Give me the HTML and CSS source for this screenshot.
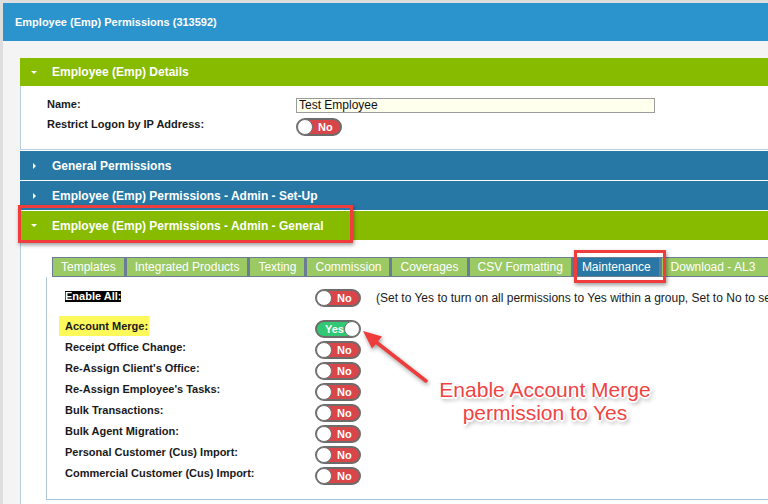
FILE: index.html
```html
<!DOCTYPE html>
<html>
<head>
<meta charset="utf-8">
<title>Employee (Emp) Permissions</title>
<link rel="stylesheet" href="styles.css">
</head>
<body>
<div class="page">
  <div class="page-header">Employee (Emp) Permissions (313592)</div>
  <div class="content">
    <div class="sec-head green"><span class="tri-down"></span>Employee (Emp) Details</div>
    <div class="details">
      <div class="lbl">Name:</div>
      <div class="input">Test Employee</div>
      <div class="lbl">Restrict Logon by IP Address:</div>
      <div><span class="tog no"><span class="knob"></span><span class="tt">No</span></span></div>
    </div>
    <div class="sec-head next blue"><span class="tri-right"></span>General Permissions</div>
    <div class="sec-head next blue"><span class="tri-right"></span>Employee (Emp) Permissions - Admin - Set-Up</div>
    <div class="sec-head next green"><span class="tri-down"></span>Employee (Emp) Permissions - Admin - General</div>
    <div class="gen-body">
      <div class="tabs">
        <div class="tabs-inner">
          <div class="tab">Templates</div>
          <div class="tab">Integrated Products</div>
          <div class="tab">Texting</div>
          <div class="tab">Commission</div>
          <div class="tab">Coverages</div>
          <div class="tab">CSV Formatting</div>
          <div class="tab active">Maintenance</div>
          <div class="tab last">Download - AL3</div>
        </div>
      </div>
      <div class="panel">
        <div class="prow first">
          <div class="lbl"><span class="sel">Enable All:</span></div>
          <span class="tog no"><span class="knob"></span><span class="tt">No</span></span>
          <div class="desc">(Set to Yes to turn on all permissions to Yes within a group, Set to No to set the values back to No)</div>
        </div>
        <div class="prow">
          <div class="lbl"><span class="hl">Account Merge:</span></div>
          <span class="tog yes"><span class="tt">Yes</span><span class="knob"></span></span>
        </div>
        <div class="prow">
          <div class="lbl">Receipt Office Change:</div>
          <span class="tog no"><span class="knob"></span><span class="tt">No</span></span>
        </div>
        <div class="prow">
          <div class="lbl">Re-Assign Client's Office:</div>
          <span class="tog no"><span class="knob"></span><span class="tt">No</span></span>
        </div>
        <div class="prow">
          <div class="lbl">Re-Assign Employee's Tasks:</div>
          <span class="tog no"><span class="knob"></span><span class="tt">No</span></span>
        </div>
        <div class="prow">
          <div class="lbl">Bulk Transactions:</div>
          <span class="tog no"><span class="knob"></span><span class="tt">No</span></span>
        </div>
        <div class="prow">
          <div class="lbl">Bulk Agent Migration:</div>
          <span class="tog no"><span class="knob"></span><span class="tt">No</span></span>
        </div>
        <div class="prow">
          <div class="lbl">Personal Customer (Cus) Import:</div>
          <span class="tog no"><span class="knob"></span><span class="tt">No</span></span>
        </div>
        <div class="prow">
          <div class="lbl">Commercial Customer (Cus) Import:</div>
          <span class="tog no"><span class="knob"></span><span class="tt">No</span></span>
        </div>
      </div>
    </div>
  </div>
</div>

<div class="redbox box-general"></div>
<div class="redbox box-tab"></div>
<svg class="arrow" width="768" height="504" viewBox="0 0 768 504" xmlns="http://www.w3.org/2000/svg">
  <line x1="426" y1="381" x2="376" y2="342" stroke="#ee3b3b" stroke-width="3.5" stroke-linecap="round"/>
  <polygon points="363,331 382,336.5 372,348.5" fill="#ee3b3b"/>
</svg>
<div class="note">Enable Account Merge<br>permission to Yes</div>
</body>
</html>
```

FILE: styles.css
```css
html, body {
  margin: 0;
  padding: 0;
}
body {
  position: relative;
  width: 768px;
  height: 504px;
  overflow: hidden;
  background: #dedede;
  font-family: "Liberation Sans", Arial, sans-serif;
  color: #1a1a1a;
}
.page {
  margin: 3px 0 0 3px;
  width: 900px;
  height: 560px;
  background: #f4f4f4;
}
.page-header {
  height: 38px;
  line-height: 38px;
  background: #2b94cd;
  color: #fff;
  font-weight: bold;
  font-size: 11px;
  padding-left: 12px;
}
.content {
  padding: 17px 0 0 17px;
}
.sec-head {
  height: 28px;
  display: flex;
  align-items: center;
  color: #fff;
  font-weight: bold;
  font-size: 12px;
  padding-left: 11px;
  white-space: nowrap;
}
.sec-head.next {
  height: 29px;
  border-top: 1px solid #fff;
}
.green { background: #87bb00; }
.blue { background: #2778a5; }
.tri-down {
  width: 0;
  height: 0;
  border-left: 3px solid transparent;
  border-right: 3px solid transparent;
  border-top: 3px solid #fff;
  margin-right: 15px;
}
.tri-right {
  width: 0;
  height: 0;
  border-top: 3px solid transparent;
  border-bottom: 3px solid transparent;
  border-left: 3px solid #fff;
  margin-left: 2px;
  margin-right: 16px;
}
.details {
  height: 64px;
  box-sizing: border-box;
  background: #fff;
  border-left: 1px solid #b7cde0;
  border-bottom: 1px solid #b7cde0;
  padding: 12px 0 0 26px;
  display: grid;
  grid-template-columns: 249px 359px;
  grid-template-rows: 15px 18px;
  row-gap: 5px;
}
.lbl {
  font-weight: bold;
  font-size: 11px;
  line-height: 13px;
  white-space: nowrap;
}
.input {
  box-sizing: border-box;
  height: 15px;
  border: 1px solid #9c9c9c;
  background: #ffffee;
  font-size: 12px;
  line-height: 13px;
  padding-left: 2px;
  color: #111;
}
.tog {
  width: 46px;
  height: 18px;
  box-sizing: border-box;
  border: 2px solid #6c6c6c;
  border-radius: 9px;
  display: flex;
  align-items: center;
  font-weight: bold;
  font-size: 11px;
  color: #fff;
  flex: none;
}
.tog.no { background: #d8464a; }
.tog.yes { background: #30c872; justify-content: space-between; }
.knob {
  width: 16px;
  height: 16px;
  box-sizing: border-box;
  border: 1px solid #707070;
  border-radius: 50%;
  background: #fff;
  flex: none;
}
.tog.no .knob { margin-left: -1px; }
.tog.yes .knob { margin-right: -1px; }
.tog.no .tt { margin-left: 5px; }
.tog.yes .tt { margin-left: 8px; }
.gen-body {
  height: 400px;
  background: #fff;
  border-left: 1px solid #b7cde0;
  padding: 17px 0 0 25px;
}
.tabs {
  display: flex;
  padding-left: 6px;
}
.tabs-inner {
  display: flex;
  gap: 1px;
  background: #6b7d95;
}
.tab {
  height: 20px;
  box-sizing: border-box;
  border: 1px solid #6b7d95;
  background: #9bc963;
  color: #fff;
  font-size: 12px;
  line-height: 18px;
  padding: 0 8px;
  white-space: nowrap;
}
.tab.last {
  padding: 0 20px 0 9px;
}
.tab.active {
  background: #2877a4;
}
.panel {
  border-left: 1px solid #adc7de;
  border-bottom: 1px solid #adc7de;
  padding: 12px 0 14px 18px;
}
.prow {
  display: flex;
  height: 18px;
  margin-bottom: 3px;
}
.prow:last-child { margin-bottom: 0; }
.prow.first { margin-bottom: 13px; }
.prow .lbl {
  width: 250px;
  flex: none;
}
.sel {
  background: #000;
  color: #fff;
  display: inline-block;
  margin-top: 2px;
  line-height: 11px;
}
.hl {
  background: #fdf95a;
  padding: 4px 1px 4px 6px;
  margin-left: -6px;
}
.desc {
  margin-left: 15px;
  font-size: 12px;
  line-height: 18px;
  white-space: nowrap;
}
.redbox {
  position: absolute;
  box-sizing: border-box;
  border: 3px solid #ef3d3d;
  box-shadow: 1px 2px 4px rgba(0, 0, 0, 0.4);
}
.box-general {
  left: 18px;
  top: 205px;
  width: 335px;
  height: 38px;
}
.box-tab {
  left: 574px;
  top: 250px;
  width: 92px;
  height: 33px;
}
.arrow {
  position: absolute;
  left: 0;
  top: 0;
  pointer-events: none;
  filter: drop-shadow(1px 2px 2px rgba(0, 0, 0, 0.4));
}
.note {
  position: absolute;
  left: 430px;
  top: 378px;
  width: 230px;
  text-align: center;
  font-size: 21px;
  line-height: 23px;
  color: #f04444;
  white-space: nowrap;
  text-shadow: -1px -1px 0 #fff, 1px -1px 0 #fff, -1px 1px 0 #fff, 1px 1px 0 #fff,
    0 -2px 0 #fff, 0 2px 0 #fff, -2px 0 0 #fff, 2px 0 0 #fff,
    2px 3px 4px rgba(0, 0, 0, 0.45);
}
```
